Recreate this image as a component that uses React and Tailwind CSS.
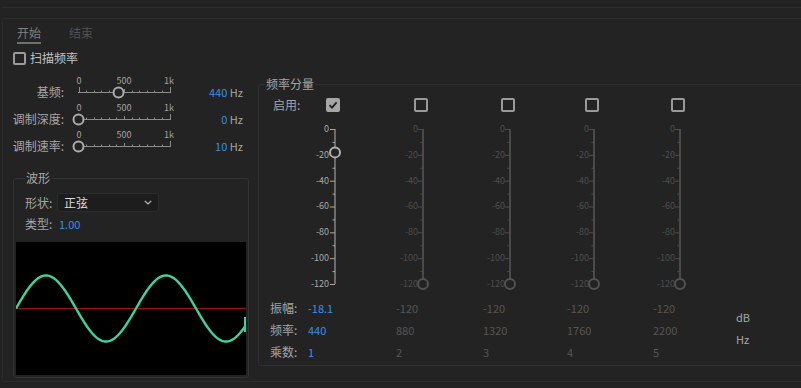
import React from 'react';

/* ── Horizontal slider (0 … 1k) ─────────────────────────────── */
function HSlider({ value }) {
  const ticks = Array.from({ length: 13 }, (_, i) => 6.5 + (i * 91) / 12);
  return (
    <div className="relative w-[104px] h-[27px]">
      <div className="absolute top-[1px] left-0 w-full h-[10px] text-[9px] leading-[10px] text-[#a3a3a3]">
        <span className="absolute left-[7px] -translate-x-1/2">0</span>
        <span className="absolute left-[52px] -translate-x-1/2">500</span>
        <span className="absolute left-[97px] -translate-x-1/2">1k</span>
      </div>
      <svg className="absolute top-[11px] left-0 overflow-visible" width="104" height="12">
        <line x1="6" y1="6.5" x2="98" y2="6.5" stroke="#8c8c8c" strokeWidth="1" />
        {ticks.map((x, i) => (
          <line key={i} x1={Math.round(x) + 0.5} x2={Math.round(x) + 0.5}
            y1={i === 0 || i === 12 ? 1 : i === 6 ? 3 : 4.5} y2={7}
            stroke="#8c8c8c" strokeWidth="1" />
        ))}
        <circle cx={6.5 + value * 91} cy="6.5" r="5" fill="#232323" stroke="#ababab" strokeWidth="2" />
      </svg>
    </div>
  );
}

function SliderRow({ label, value, num }) {
  return (
    <div className="flex items-start h-[27px]">
      <div className="w-[61px] pt-[9px] text-right text-[12px] leading-[16px] text-[#a6a6a6] whitespace-nowrap">{label}</div>
      <div className="ml-[8px]"><HSlider value={value} /></div>
      <div className="w-[67px] pt-[10px] text-right text-[11px] leading-[14px] whitespace-nowrap">
        <span className="text-[#3b8fe8]">{num}</span>
        <span className="text-[#a6a6a6]"> Hz</span>
      </div>
    </div>
  );
}

/* ── Vertical slider (0 … -120 dB) ──────────────────────────── */
function VSlider({ active, db }) {
  const labels = ['0', '-20', '-40', '-60', '-80', '-100', '-120'];
  const y = v => 5 + (-v / 120) * 155;
  const c = active ? '#a8a8a8' : '#4d4d4d';
  return (
    <div className="relative h-[165px]">
      <div className={active
        ? 'absolute left-0 top-0 w-[34px] h-full flex flex-col justify-between items-end text-[9px] leading-[10px] text-[#a8a8a8]'
        : 'absolute left-0 top-0 w-[35px] h-full flex flex-col justify-between items-end text-[9px] leading-[10px] text-[#4d4d4d]'}>
        {labels.map(l => <span key={l}>{l}</span>)}
      </div>
      <svg className="absolute left-[32px] top-0 overflow-visible" width="16" height="165">
        <line x1="8" y1="5" x2="8" y2="160" stroke={active ? '#858585' : '#4a4a4a'} strokeWidth={active ? 1.5 : 2} />
        {labels.map((l, i) => (
          <line key={l} x1="3" x2="8" y1={y(-i * 20) + 0.5} y2={y(-i * 20) + 0.5} stroke={c} strokeWidth="1" />
        ))}
        {labels.slice(1).map((l, i) => (
          <line key={'m' + l} x1="5.5" x2="8" y1={y(-i * 20 - 10) + 0.5} y2={y(-i * 20 - 10) + 0.5} stroke={c} strokeWidth="1" />
        ))}
        <circle cx="8" cy={y(db)} r="5" fill="#232323" stroke={active ? '#b0b0b0' : '#525252'} strokeWidth="2" />
      </svg>
    </div>
  );
}

function Checkbox({ checked }) {
  if (checked) {
    return (
      <div className="w-[14px] h-[14px] rounded-[2px] bg-[#a6a6a6] flex items-center justify-center">
        <svg width="10" height="10" viewBox="0 0 10 10">
          <path d="M1.5 5.2 L4 7.6 L8.6 2.4" fill="none" stroke="#1e1e1e" strokeWidth="1.8" />
        </svg>
      </div>
    );
  }
  return <div className="w-[14px] h-[14px] rounded-[2px] border-2 border-[#9a9a9a]" />;
}

function Column({ w, active, db, amp, freq, mult }) {
  const tc = active ? 'text-[#3b8fe8]' : 'text-[#555555]';
  return (
    <div className={`${w} shrink-0`}>
      <div className="h-[14px] pl-[31px]"><Checkbox checked={active} /></div>
      <div className="mt-[12px]"><VSlider active={active} db={db} /></div>
      <div className={`mt-[8px] pl-[13px] text-[11px] leading-[14px] ${tc}`}>
        <div className="h-[22px] flex items-center">{amp}</div>
        <div className="h-[22px] flex items-center">{freq}</div>
        <div className="h-[22px] flex items-center">{mult}</div>
      </div>
    </div>
  );
}

/* ── Waveform canvas ────────────────────────────────────────── */
function Wave() {
  const pts = [];
  for (let x = 0; x <= 229; x += 1) {
    pts.push(`${x === 0 ? 'M' : 'L'}${x} ${(66.5 - 33 * Math.sin((2 * Math.PI * x) / 120)).toFixed(2)}`);
  }
  return (
    <svg width="230" height="133" className="block">
      <rect width="230" height="133" fill="#000" />
      <line x1="0" y1="66.5" x2="230" y2="66.5" stroke="#a01010" strokeWidth="1" />
      <path d={pts.join(' ')} fill="none" stroke="#3fd39c" strokeWidth="2.4" />
      <path d="M229 90 L229 75" stroke="#3fd39c" strokeWidth="2" />
    </svg>
  );
}

export default function App() {
  return (
    <div className="w-[801px] h-[388px] overflow-hidden bg-[#232323] font-['Noto_Sans_CJK_SC','Noto_Sans',sans-serif] select-none">
      <div className="ml-[2px] w-[820px] h-[8px] border-b border-[#2c2c2c]" />

      {/* Outer panel */}
      <div className="mt-[10px] ml-[2px] w-[830px] h-[364px] rounded-[3px] border border-[#2c2c2c] flex">
        {/* Left column */}
        <div className="w-[247px] shrink-0">
          <div className="pt-[6px] pl-[14px] flex gap-[28px] text-[12px] leading-[16px]">
            <span className="pb-[1px] border-b-2 border-[#6e6e6e] text-[#808080]">开始</span>
            <span className="text-[#525252]">结束</span>
          </div>

          <div className="mt-[7px] ml-[10px] h-[14px] flex items-center gap-[4px]">
            <div className="w-[13px] h-[13px] rounded-[2px] border-2 border-[#9a9a9a]" />
            <span className="text-[12px] leading-[16px] text-[#c4c4c4]">扫描频率</span>
          </div>

          <div className="mt-[10px]">
            <SliderRow label="基频:" value={0.44} num="440" />
            <SliderRow label="调制深度:" value={0} num="0" />
            <SliderRow label="调制速率:" value={0} num="10" />
          </div>

          {/* 波形 group */}
          <div className="relative mt-[22px] ml-[10px] w-[236px] rounded-[3px] border border-[#333333] pb-[2px]">
            <span className="absolute -top-[9px] left-[11px] px-[1px] bg-[#232323] text-[12px] leading-[16px] text-[#a8a8a8]">波形</span>
            <div className="mt-[14px] pl-[11px] flex items-center h-[19px]">
              <span className="w-[32px] text-[12px] leading-[16px] text-[#a6a6a6]">形状:</span>
              <div className="w-[102px] h-[19px] rounded-[3px] bg-[#1d1d1d] border border-[#2c2c2c] flex items-center justify-between pl-[6px] pr-[6px]">
                <span className="text-[12px] leading-[16px] text-[#dcdcdc]">正弦</span>
                <svg width="8" height="5" viewBox="0 0 8 5">
                  <path d="M0.8 0.8 L4 4 L7.2 0.8" fill="none" stroke="#bdbdbd" strokeWidth="1.2" />
                </svg>
              </div>
            </div>
            <div className="mt-[3px] pl-[11px] flex items-center h-[18px]">
              <span className="w-[34px] text-[12px] leading-[16px] text-[#a6a6a6]">类型:</span>
              <span className="text-[11px] leading-[14px] text-[#3b8fe8]">1.00</span>
            </div>
            <div className="mt-[9px] mx-[2px]"><Wave /></div>
          </div>
        </div>

        {/* 频率分量 group */}
        <div className="relative mt-[65px] ml-[8px] w-[570px] h-[282px] rounded-[3px] border border-[#2f2f2f] pl-[11px] flex">
          <span className="absolute -top-[9px] left-[6px] px-[1px] bg-[#232323] text-[12px] leading-[16px] text-[#a3a3a3]">频率分量</span>

          <div className="w-[25px] shrink-0 pt-[13px] text-[12px] leading-[16px] text-[#a3a3a3] whitespace-nowrap">
            <div className="h-[14px] ml-[3px] flex items-center">启用:</div>
            <div className="h-[165px] mt-[12px]" />
            <div className="mt-[8px]">
              <div className="h-[22px] flex items-center">振幅:</div>
              <div className="h-[22px] flex items-center">频率:</div>
              <div className="h-[22px] flex items-center">乘数:</div>
            </div>
          </div>

          <div className="pt-[13px] flex">
            <Column w="w-[88px]" active db={-18.1} amp="-18.1" freq="440" mult="1" />
            <Column w="w-[87px]" db={-120} amp="-120" freq="880" mult="2" />
            <Column w="w-[84px]" db={-120} amp="-120" freq="1320" mult="3" />
            <Column w="w-[86px]" db={-120} amp="-120" freq="1760" mult="4" />
            <Column w="w-[96px]" db={-120} amp="-120" freq="2200" mult="5" />
            <div className="shrink-0 pt-[208px] text-[11px] leading-[14px] text-[#a8a8a8]">
              <div className="h-[22px] flex items-center">dB</div>
              <div className="h-[22px] flex items-center">Hz</div>
            </div>
          </div>
        </div>
      </div>
    </div>
  );
}
